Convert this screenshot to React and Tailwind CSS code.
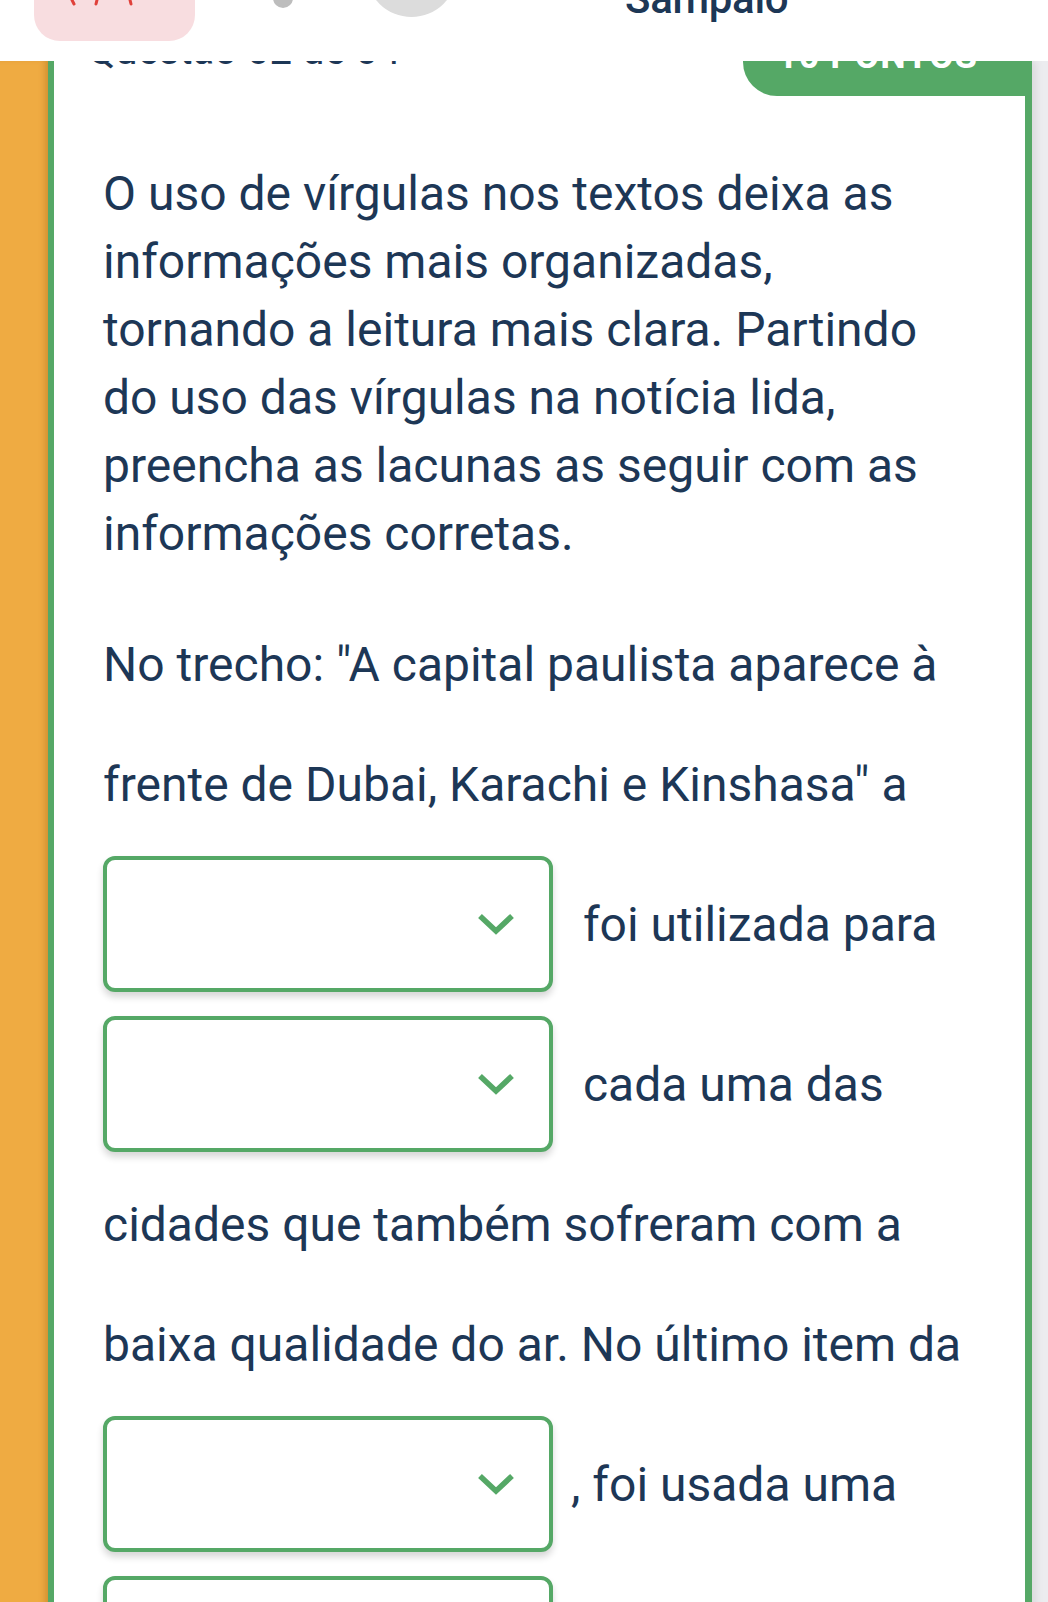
import { useState } from 'react'

const ink = 'text-[#1d3756]'

function Chevron() {
  return (
    <svg width="38" height="24" viewBox="0 0 38 24" fill="none" aria-hidden="true">
      <polyline points="3,4 19,19 35,4" stroke="#55a866" strokeWidth="5.5" />
    </svg>
  )
}

function Blank({ value, onChange }) {
  return (
    <button
      type="button"
      onClick={onChange}
      className="flex h-[136px] w-[450px] shrink-0 items-center justify-end rounded-[12px] border-4 border-[#55a866] bg-white pr-[34px] shadow-[0_5px_7px_rgba(0,0,0,0.16)]"
    >
      {value && <span className={`mr-auto pl-6 text-[40px] ${ink}`}>{value}</span>}
      <Chevron />
    </button>
  )
}

function TextRow({ children }) {
  return <div className={`h-[120px] whitespace-nowrap leading-[120px] ${ink}`}>{children}</div>
}

function BlankRow({ children }) {
  const [value] = useState('')
  return (
    <div className="flex h-[160px] items-start">
      <div className="mt-[11px]">
        <Blank value={value} />
      </div>
      <span className={`ml-[18px] whitespace-pre leading-[160px] ${ink}`}>{children}</span>
    </div>
  )
}

export default function App() {
  return (
    <div className="h-[1602px] w-[1048px] overflow-hidden bg-[#ececef] font-['Roboto',sans-serif]">
      <header className="relative z-10 flex h-[61px] items-start overflow-hidden bg-white">
        <div className="-mt-[40px] ml-[34px] h-[81px] w-[161px] rounded-[26px] bg-[#f8dde0]">
          <svg width="161" height="81" viewBox="0 0 161 81" aria-hidden="true">
            <path d="M38 40 l2 4 M63 40 l-1 4 M96 40 l1 4" stroke="#e0403a" strokeWidth="3" strokeLinecap="round" />
          </svg>
        </div>
        <div className="-mt-[12px] ml-[78px] h-[20px] w-[20px] rounded-full bg-[#bdbdbd]" />
        <div className="-mt-[74px] ml-[73px] h-[91px] w-[91px] rounded-full bg-[#dcdcdc]" />
        <span className="-mt-[22px] ml-[168px] text-[42px] font-medium leading-none tracking-[-0.3px] text-[#1d3756]">
          Sampaio
        </span>
      </header>

      <main className="flex h-full">
        <div className="w-[48px] shrink-0 bg-[#efab42] shadow-[inset_-6px_0_6px_-3px_rgba(120,70,0,0.25)]" />
        <section className="w-[984px] shrink-0 border-l-[6px] border-r-[7px] border-[#55a866] bg-white shadow-[4px_0_8px_rgba(0,0,0,0.08)]">
          <div className="flex h-[35px] items-start justify-between overflow-hidden">
            <span className={`-mt-[30px] ml-[34px] text-[40px] leading-none ${ink}`}>Questão 02 de 04</span>
            <div className="h-[35px] w-[282px] overflow-hidden rounded-bl-[34px] bg-[#55a866] pl-[34px]">
              <div className="-mt-[23px] text-[36px] font-bold leading-none tracking-[1px] text-white">10 PONTOS</div>
            </div>
          </div>

          <div className="pl-[49px] pr-[40px] text-[48px]">
            <p className={`mt-[64px] w-[860px] leading-[68px] ${ink}`}>
              O uso de vírgulas nos textos deixa as informações mais organizadas, tornando a leitura mais
              clara. Partindo do uso das vírgulas na notícia lida, preencha as lacunas as seguir com as
              informações corretas.
            </p>

            <div className="mt-[37px] flex flex-col">
              <TextRow>No trecho: "A capital paulista aparece à</TextRow>
              <TextRow>frente de Dubai, Karachi e Kinshasa" a</TextRow>
              <BlankRow> foi utilizada para</BlankRow>
              <BlankRow> cada uma das</BlankRow>
              <TextRow>cidades que também sofreram com a</TextRow>
              <TextRow>baixa qualidade do ar. No último item da</TextRow>
              <BlankRow>, foi usada uma</BlankRow>
              <BlankRow></BlankRow>
            </div>
          </div>
        </section>
      </main>
    </div>
  )
}
